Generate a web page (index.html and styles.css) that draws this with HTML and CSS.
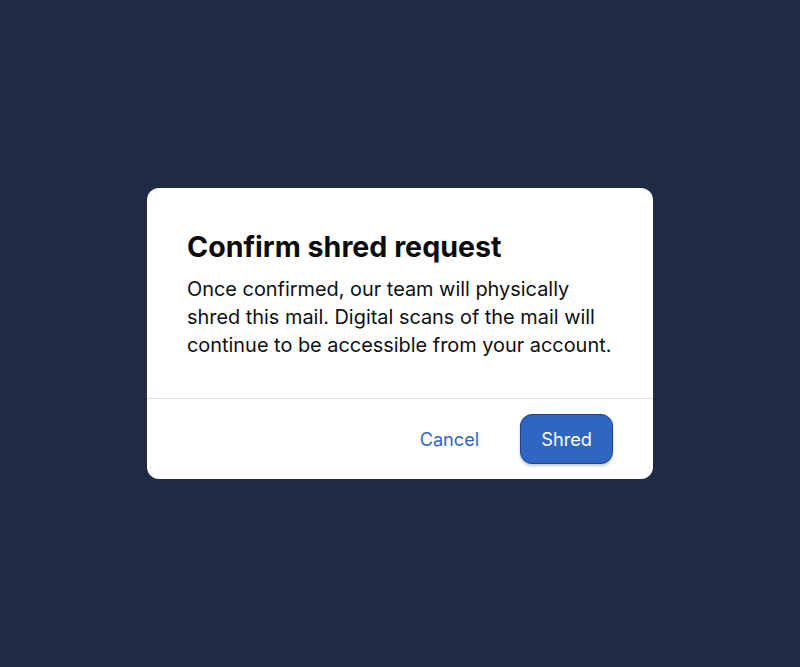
FILE: index.html
```html
<!DOCTYPE html>
<html lang="en">
<head>
<meta charset="utf-8">
<title>Confirm shred request</title>
<link rel="stylesheet" href="styles.css">
</head>
<body>
<div class="dialog" role="dialog" aria-labelledby="dlg-title">
  <div class="dialog-body">
    <h1 id="dlg-title" class="dialog-title">Confirm shred request</h1>
    <p class="dialog-text">Once confirmed, our team will physically shred this mail. Digital scans of the mail will continue to be accessible from your account.</p>
  </div>
  <div class="dialog-footer">
    <button class="btn btn-link" type="button">Cancel</button>
    <button class="btn btn-primary" type="button">Shred</button>
  </div>
</div>
</body>
</html>
```
FILE: styles.css
```css
html, body {
  margin: 0;
  height: 100%;
}
body {
  background: #1f2a44;
  font-family: Inter, "Noto Sans", sans-serif;
  display: flex;
  align-items: center;
  justify-content: center;
}
.dialog {
  width: 506px;
  background: #ffffff;
  border-radius: 12px;
  overflow: hidden;
}
.dialog-body {
  padding: 41px 40px 39px 40px;
  border-bottom: 1px solid #dde0ea;
}
.dialog-title {
  margin: 0 0 10px 0;
  font-size: 28.6px;
  line-height: 36px;
  font-weight: 700;
  color: #0b0b0c;
}
.dialog-text {
  margin: 0;
  font-size: 19.9px;
  line-height: 28px;
  color: #0e0f12;
}
.dialog-footer {
  display: flex;
  justify-content: flex-end;
  align-items: center;
  gap: 20px;
  padding: 15px 40px;
}
.btn {
  font-family: inherit;
  font-size: 18.2px;
  line-height: 24px;
  height: 50px;
  padding: 0 20px;
  border-radius: 12px;
  cursor: pointer;
}
.btn-link {
  background: transparent;
  border: 1px solid transparent;
  color: #2f66c2;
}
.btn-primary {
  background: #2e66c2;
  border: 1px solid #23447f;
  color: #ffffff;
  box-shadow: 0 2px 3px rgba(20, 30, 60, 0.25);
}
```
